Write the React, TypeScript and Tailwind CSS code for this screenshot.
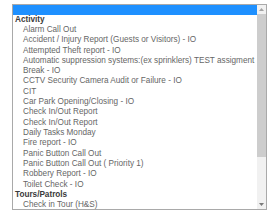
import React from "react";

type Row = { label: string; group?: boolean };

const rows: Row[] = [
  { label: "Activity", group: true },
  { label: "Alarm Call Out" },
  { label: "Accident / Injury Report (Guests or Visitors) - IO" },
  { label: "Attempted Theft report - IO" },
  { label: "Automatic suppression systems:(ex sprinklers) TEST assigment" },
  { label: "Break - IO" },
  { label: "CCTV Security Camera Audit or Failure - IO" },
  { label: "CIT" },
  { label: "Car Park Opening/Closing - IO" },
  { label: "Check In/Out Report" },
  { label: "Check In/Out Report" },
  { label: "Daily Tasks Monday" },
  { label: "Fire report - IO" },
  { label: "Panic Button Call Out" },
  { label: "Panic Button Call Out ( Priority 1)" },
  { label: "Robbery Report - IO" },
  { label: "Toilet Check - IO" },
  { label: "Tours/Patrols", group: true },
  { label: "Check in Tour (H&S)" },
];

export default function App() {
  return (
    <div
      className="w-[276px] h-[215px] bg-white pt-[4px] pl-[12px]"
      style={{ fontFamily: '"Liberation Sans", Arial, sans-serif' }}
    >
      <div className="w-[255px] h-[206px] border border-[#a9a9a9] flex overflow-hidden">
        <div className="flex-1 min-w-0 flex flex-col overflow-hidden">
          <div className="h-[9.5px] shrink-0 bg-[#1e90ff]" />
          {rows.map((r, i) => (
            <div
              key={i}
              className={
                r.group
                  ? "h-[10.33px] shrink-0 flex items-center pl-[2px] text-[8.2px] font-bold text-[#3a3a3a] whitespace-nowrap"
                  : "h-[10.33px] shrink-0 flex items-center pl-[10px] text-[8.2px] text-[#666] whitespace-nowrap"
              }
            >
              {r.label}
            </div>
          ))}
        </div>
        <div className="w-[9px] shrink-0 flex flex-col bg-[#f1f1f1]">
          <div className="h-[9px] shrink-0 flex items-center justify-center">
            <svg width="5" height="3" viewBox="0 0 5 3">
              <polygon points="2.5,0 5,3 0,3" fill="#a3a3a3" />
            </svg>
          </div>
          <div className="h-[143px] shrink-0 bg-[#cdcdcd]" />
          <div className="flex-1" />
          <div className="h-[9px] shrink-0 flex items-center justify-center">
            <svg width="5" height="3" viewBox="0 0 5 3">
              <polygon points="0,0 5,0 2.5,3" fill="#7a7a7a" />
            </svg>
          </div>
        </div>
      </div>
    </div>
  );
}
